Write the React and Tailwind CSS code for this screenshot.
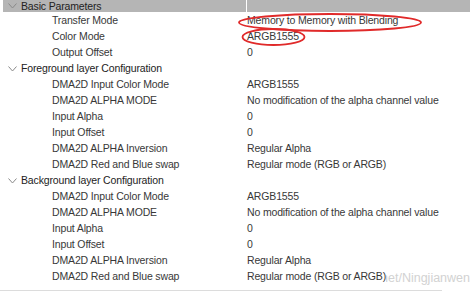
const sections = [
  {
    title: 'Basic Parameters',
    header: true,
    rows: [
      ['Transfer Mode', 'Memory to Memory with Blending'],
      ['Color Mode', 'ARGB1555'],
      ['Output Offset', '0'],
    ],
  },
  {
    title: 'Foreground layer Configuration',
    rows: [
      ['DMA2D Input Color Mode', 'ARGB1555'],
      ['DMA2D ALPHA MODE', 'No modification of the alpha channel value'],
      ['Input Alpha', '0'],
      ['Input Offset', '0'],
      ['DMA2D ALPHA Inversion', 'Regular Alpha'],
      ['DMA2D Red and Blue swap', 'Regular mode (RGB or ARGB)'],
    ],
  },
  {
    title: 'Background layer Configuration',
    rows: [
      ['DMA2D Input Color Mode', 'ARGB1555'],
      ['DMA2D ALPHA MODE', 'No modification of the alpha channel value'],
      ['Input Alpha', '0'],
      ['Input Offset', '0'],
      ['DMA2D ALPHA Inversion', 'Regular Alpha'],
      ['DMA2D Red and Blue swap', 'Regular mode (RGB or ARGB)'],
    ],
  },
];

function Chevron() {
  return (
    <svg width="9" height="6" viewBox="0 0 9 6" className="ml-[5px] mr-[4px]">
      <path d="M0.5 0.5 L4.5 5 L8.5 0.5" fill="none" stroke="#8a8a8a" strokeWidth="1" />
    </svg>
  );
}

export default function App() {
  return (
    <div
      className="relative w-[474px] h-[294px] overflow-hidden bg-white text-[10.5px] tracking-[-0.15px] text-[#383838]"
      style={{ fontFamily: '"Liberation Sans", Arial, sans-serif' }}
    >
      <div className="absolute right-[4px] top-[269px] text-[12.5px] tracking-normal text-[#d2d2d2]">
        https://blog.csdn.net/Ningjianwen
      </div>
      <div className="pt-[1px]">
        {sections.map((s) =>
          <div key={s.title} className="relative">
            {s.header ? (
              <div className="flex h-[12px] -mt-[1px] mb-[1px] ml-[3px] w-[467px]">
                <div className="flex items-center w-[243px] bg-[#b5b5b5] leading-[11px]">
                  <Chevron />
                  <span className="text-[#222]">{s.title}</span>
                </div>
                <div className="w-[1px] bg-white" />
                <div className="flex-1 bg-[#b5b5b5]" />
              </div>
            ) : (
              <div className="flex items-center h-[16px] ml-[3px]">
                <Chevron />
                <span className="text-[#222]">{s.title}</span>
              </div>
            )}
            {s.rows.map(([k, v], i) => (
              <div key={i} className="flex items-center h-[16px]">
                <div className="w-[247px] pl-[52px]">{k}</div>
                <div className="bg-white">{v}</div>
              </div>
            ))}
          </div>
        )}
      </div>
      <div className="absolute left-0 top-[290px] w-[442px] h-[1px] bg-[#dcdcdc]" />
      <svg className="absolute left-0 top-0" width="474" height="294">
        <ellipse cx="330" cy="22.5" rx="91" ry="8.5" fill="none" stroke="#e02a2a" strokeWidth="1.8" />
        <ellipse cx="273.5" cy="37" rx="31" ry="8" fill="none" stroke="#e02a2a" strokeWidth="1.8" />
      </svg>
    </div>
  );
}
